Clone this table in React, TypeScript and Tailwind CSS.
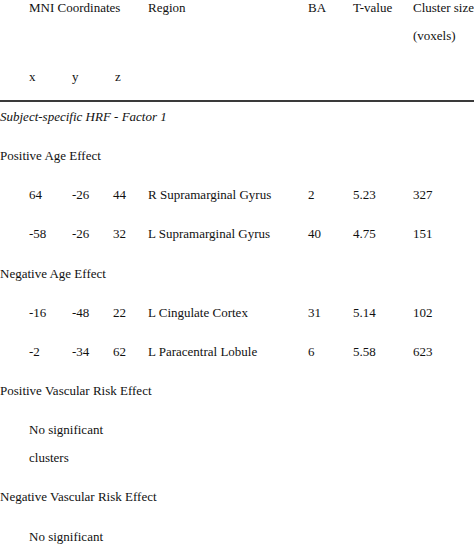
const cols = 'grid grid-cols-[29px_43px_41px_35px_160px_45px_60px_61px]';

type Row = { x: string; y: string; z: string; region: string; ba: string; t: string; size: string };

const posAge: Row[] = [
  { x: '64', y: '-26', z: '44', region: 'R Supramarginal Gyrus', ba: '2', t: '5.23', size: '327' },
  { x: '-58', y: '-26', z: '32', region: 'L Supramarginal Gyrus', ba: '40', t: '4.75', size: '151' },
];

const negAge: Row[] = [
  { x: '-16', y: '-48', z: '22', region: 'L Cingulate Cortex', ba: '31', t: '5.14', size: '102' },
  { x: '-2', y: '-34', z: '62', region: 'L Paracentral Lobule', ba: '6', t: '5.58', size: '623' },
];

function DataRow({ r }: { r: Row }) {
  return (
    <div className={`${cols} py-[5.6px] whitespace-nowrap`}>
      <div />
      <div>{r.x}</div>
      <div>{r.y}</div>
      <div>{r.z}</div>
      <div>{r.region}</div>
      <div>{r.ba}</div>
      <div>{r.t}</div>
      <div>{r.size}</div>
    </div>
  );
}

function Label({ text }: { text: string }) {
  return <div className="py-[5.6px] whitespace-nowrap">{text}</div>;
}

function NoClusters() {
  return (
    <div className={`${cols} py-[5.6px]`}>
      <div />
      <div className="col-span-2">No significant clusters</div>
    </div>
  );
}

export default function App() {
  return (
    <div
      className="w-[474px] h-[545px] overflow-hidden bg-white text-[13px] leading-[28px] text-[#111]"
      style={{ fontFamily: '"Liberation Serif", "Times New Roman", serif' }}
    >
      <div className="-mt-[11.5px]">
        {/* Header */}
        <div className={`${cols} py-[5.6px] whitespace-nowrap`}>
          <div />
          <div className="col-span-3">MNI Coordinates</div>
          <div>Region</div>
          <div>BA</div>
          <div>T-value</div>
          <div>
            Cluster size
            <br />
            (voxels)
          </div>
        </div>
        <div className={`${cols} pt-[7.3px] pb-[9px]`}>
          <div />
          <div>x</div>
          <div>y</div>
          <div className="pl-[2px]">z</div>
        </div>
        <div className="h-[2px] bg-[#3a3a3a]" />

        {/* Body */}
        <div className="pt-px pb-[5.4px] italic whitespace-nowrap">Subject-specific HRF - Factor 1</div>
        <Label text="Positive Age Effect" />
        {posAge.map((r) => (
          <DataRow key={r.x} r={r} />
        ))}
        <Label text="Negative Age Effect" />
        {negAge.map((r) => (
          <DataRow key={r.x} r={r} />
        ))}
        <Label text="Positive Vascular Risk Effect" />
        <NoClusters />
        <Label text="Negative Vascular Risk Effect" />
        <NoClusters />
      </div>
    </div>
  );
}
